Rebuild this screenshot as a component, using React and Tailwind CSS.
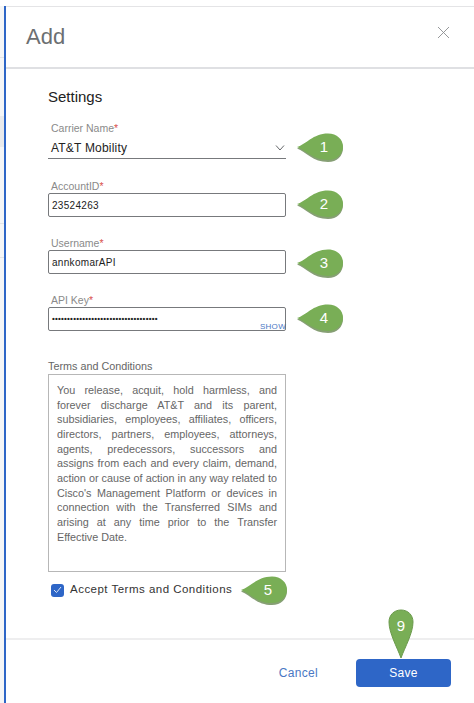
import React from "react";

const termsLines = [
  "You release, acquit, hold harmless, and",
  "forever discharge AT&T and its parent,",
  "subsidiaries, employees, affiliates, officers,",
  "directors, partners, employees, attorneys,",
  "agents, predecessors, successors and",
  "assigns from each and every claim, demand,",
  "action or cause of action in any way related to",
  "Cisco's Management Platform or devices in",
  "connection with the Transferred SIMs and",
  "arising at any time prior to the Transfer",
];

const Req = () => <span className="text-[#d9534f]">*</span>;

const Callout = ({ n, className }) => (
  <div className={`absolute w-[48px] h-[29px] ${className}`}>
    <svg width="48" height="29" viewBox="0 0 48 29">
      <path d="M1 14.5 C10 12 17 1 32 1 C41 1 47 7 47 14 C47 22 41 28 32 28 C17 28 10 18 1 14.5 Z" fill="#5d7f45" transform="translate(0 1)" opacity="0.75" />
      <path d="M1 14 C10 11.5 17 0.5 32 0.5 C41 0.5 47 6.5 47 13.5 C47 21 41 27 32 27 C17 27 10 17.5 1 14 Z" fill="#79ae56" />
    </svg>
    <span className="absolute left-[20px] w-[16px] top-[4px] text-center text-[15px] leading-[20px] text-white">{n}</span>
  </div>
);

const Field = ({ label, value, children }) => (
  <div className="relative w-[238px]">
    <p className="text-[10.5px] leading-[14px] pl-[3px] text-[#8a8a8a]">
      {label}
      <Req />
    </p>
    <div className="h-[24px] border border-[#77797c] rounded-[2px] bg-white flex items-center pl-[3px] text-[10px] tracking-[0.3px] text-[#222]">
      {value}
    </div>
    {children}
  </div>
);

export default function App() {
  return (
    <div className="w-[474px] h-[703px] overflow-hidden bg-white flex font-['Liberation_Sans',sans-serif]">
      {/* page behind the drawer shows through this strip */}
      <div className="w-[4px] shrink-0 mt-[6px] bg-[#f5f6f7] flex flex-col">
        <div className="h-[52px] border-b border-[#e3e4e6]" />
        <div className="h-[31px] mt-[58px] bg-[#e9eaec]" />
        <div className="h-[77px] border-b border-[#e3e4e6]" />
        <div className="h-[34px] border-b border-[#e3e4e6]" />
      </div>
      <div className="w-[2px] shrink-0 mt-[6px] bg-[#2e66c7]" />
      <div className="flex-1 flex flex-col mt-[6px] border-t border-[#e4e4e6]">
        <header className="h-[62px] shrink-0 border-b-2 border-[#dfe0e3] flex justify-between pl-[20px] pr-[24px]">
          <h1 className="text-[22px] leading-[26px] mt-[17px] text-[#6c6f72]">Add</h1>
          <svg className="mt-[19px]" width="13" height="13" viewBox="0 0 13 13" fill="none" stroke="#8b8d90" strokeWidth="0.9">
            <path d="M1 1 L12 12 M12 1 L1 12" />
          </svg>
        </header>

        <main className="flex-1 pl-[42px] pt-[19px]">
          <h2 className="text-[15px] leading-[18px] text-[#222]">Settings</h2>

          <div className="relative w-[238px] mt-[15px]">
            <p className="text-[10.5px] leading-[14px] pl-[3px] text-[#8a8a8a]">
              Carrier Name
              <Req />
            </p>
            <div className="h-[24px] border-b border-[#77797c] flex items-center justify-between pt-[3px] pl-[3px] pr-[1px] text-[12px] tracking-[0.2px] text-[#222]">
              AT&amp;T Mobility
              <svg width="10" height="6" viewBox="0 0 10 6" fill="none" stroke="#66686b" strokeWidth="1">
                <path d="M1 0.5 L5 5 L9 0.5" />
              </svg>
            </div>
            <Callout n="1" className="left-[248px] top-[12px]" />
          </div>

          <div className="flex flex-col gap-[19px] mt-[20px]">
            <Field label="AccountID" value="23524263">
              <Callout n="2" className="left-[248px] top-[11px]" />
            </Field>
            <Field label="Username" value="annkomarAPI">
              <Callout n="3" className="left-[248px] top-[13px]" />
            </Field>
            <Field label="API Key" value={<span className="text-[8px] tracking-[0.22px] font-bold">•••••••••••••••••••••••••••••••••••</span>}>
              <span className="absolute right-0 bottom-[-1px] text-[8px] leading-[10px] tracking-[0.3px] text-[#4a78c4]">SHOW</span>
              <Callout n="4" className="left-[248px] top-[11px]" />
            </Field>
          </div>

          <p className="mt-[28px] text-[10.8px] leading-[14px] text-[#666]">Terms and Conditions</p>
          <div className="w-[238px] h-[198px] mt-[1px] border border-[#b7b7b7] px-[8px] pt-[8px] text-[10.8px] leading-[14.67px] text-[#666]">
            {termsLines.map((line) => (
              <p key={line} className="text-justify [text-align-last:justify]">
                {line}
              </p>
            ))}
            <p>Effective Date.</p>
          </div>

          <div className="relative mt-[11px] w-[238px] h-[14px] flex items-center pl-[3px] gap-[6px]">
            <div className="w-[13px] h-[13px] rounded-[3px] bg-[#2e66c7] flex items-center justify-center">
              <svg width="9" height="8" viewBox="0 0 9 8" fill="none" stroke="#dbe6f7" strokeWidth="1">
                <path d="M1 4 L3.5 6.5 L8 1" />
              </svg>
            </div>
            <span className="text-[11.5px] tracking-[0.48px] whitespace-nowrap text-[#333] -mt-[1px]">Accept Terms and Conditions</span>
            <Callout n="5" className="left-[192px] top-[-7px]" />
          </div>
        </main>

        <footer className="relative h-[65px] shrink-0 border-t-2 border-[#eeeeef] flex items-center justify-end pr-[23px] gap-[38px]">
          <button className="text-[12px] tracking-[0.3px] text-[#4a78c4] mt-[2px]">Cancel</button>
          <button className="w-[95px] h-[28px] rounded-[4px] bg-[#2e66c7] text-white text-[12px] tracking-[0.3px] mt-[2px]">Save</button>
          <div className="absolute left-[382px] top-[-31px] w-[26px] h-[50px]">
            <svg width="26" height="50" viewBox="0 0 26 50">
              <path d="M13 49 C9 38 1 24 1 13 C1 6 6 1 13 1 C20 1 25 6 25 13 C25 24 17 38 13 49 Z" fill="#79ae56" stroke="#6b9a4c" strokeWidth="1" />
            </svg>
            <span className="absolute inset-x-0 top-[7px] text-center text-[15px] leading-[20px] text-white">9</span>
          </div>
        </footer>
      </div>
    </div>
  );
}
